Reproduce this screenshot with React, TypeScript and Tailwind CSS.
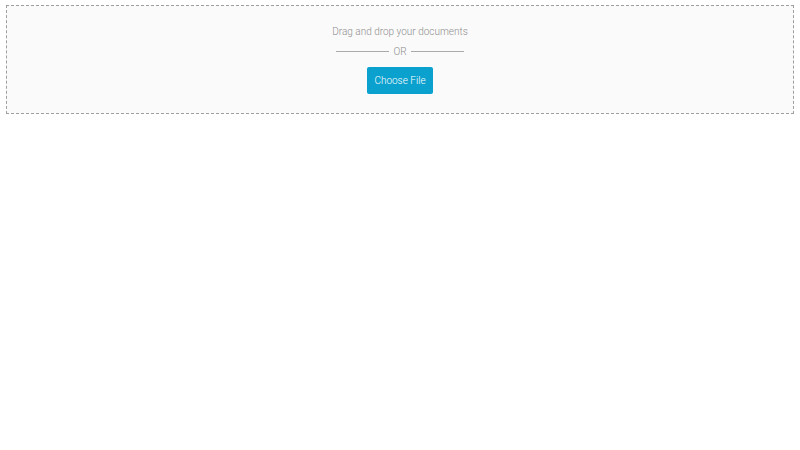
import React from "react";

const App = () => {
  return (
    <div className="min-h-screen bg-white px-[6px] pt-[5px] font-['Roboto',sans-serif]">
      {/* Drop zone */}
      <div className="flex h-[109px] flex-col items-center border-[1.5px] border-dashed border-[#9e9e9e] bg-[#fafafa] pt-[18px]">
        <p className="text-[10px] leading-[16px] font-light text-[#8e8e8e]">
          Drag and drop your documents
        </p>
        <div className="mt-[4px] flex h-[14px] items-center gap-[4px]">
          <span className="h-px w-[53px] bg-[#aaaaaa]" />
          <span className="text-[10px] font-light text-[#8e8e8e]">OR</span>
          <span className="h-px w-[53px] bg-[#aaaaaa]" />
        </div>
        <button className="mt-[9px] h-[27px] w-[66px] rounded-[2px] bg-[#0aa1cf] text-[10px] font-light text-white">
          Choose File
        </button>
      </div>
    </div>
  );
};

export default App;
